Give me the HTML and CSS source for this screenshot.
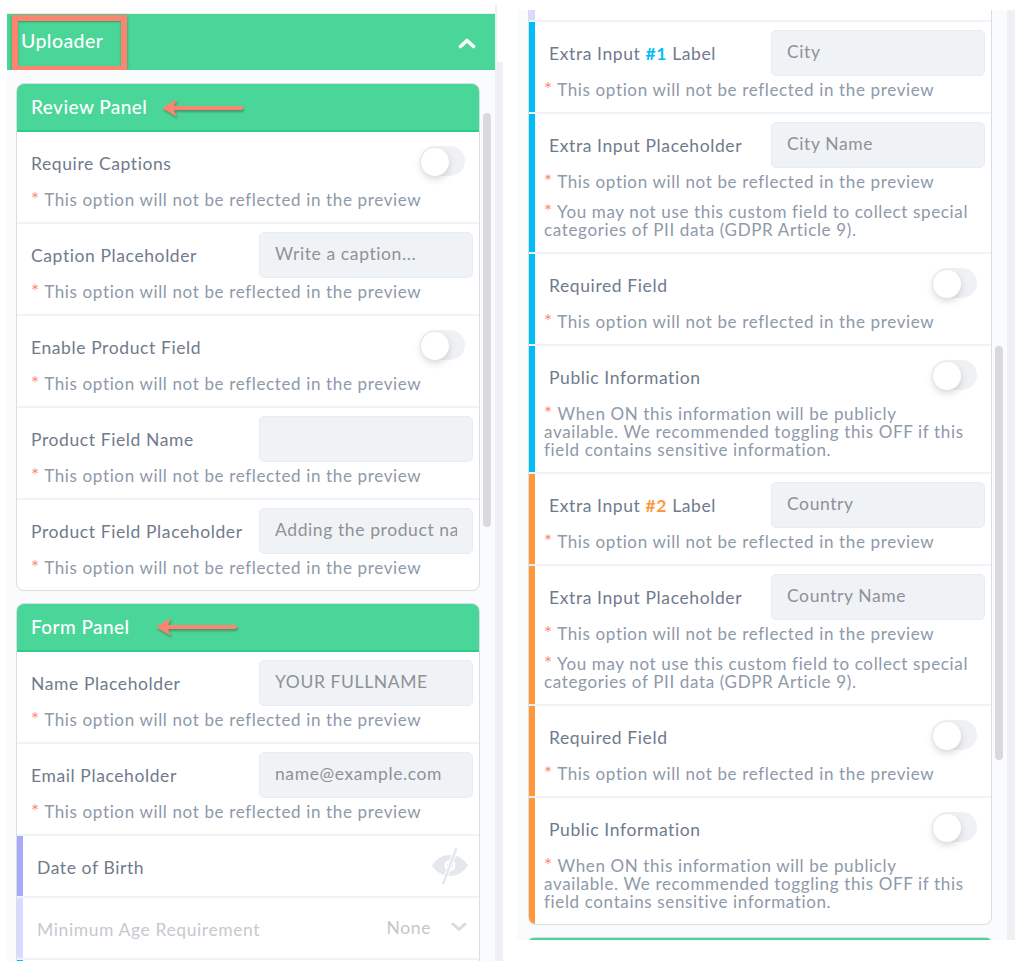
FILE: index.html
```html
<!DOCTYPE html>
<html lang="en">
<head>
<meta charset="utf-8">
<title>Uploader settings</title>
<link rel="stylesheet" href="styles.css">
</head>
<body>
<div class="page">
  <section class="side side-left">
    <div class="main">
      <header class="top-bar">
        <h1 class="top-title">Uploader</h1>
        <svg class="top-chevron" width="18" height="12" viewBox="0 0 18 12"><path d="M2.500 9.500 9 3.500l6.500 6" fill="none" stroke="#fff" stroke-width="3.600" stroke-linecap="round" stroke-linejoin="round"/></svg>
        <div class="callout"></div>
      </header>
      <div class="panel panel-left">
        <div class="scroll-thumb thumb-left"></div>
        <article class="card">
          <h2 class="card-head">Review Panel
            <svg class="arrow arrow-review" width="90" height="28" viewBox="0 0 90 28"><path d="M3 14 18 5l-3 7h67a2 2 0 0 1 0 4H15l3 7z" fill="#fc8570"/></svg>
          </h2>
          <div class="row"><div class="line"><span class="label">Require Captions</span><span class="toggle"><i class="knob"></i></span></div><p class="note"><b>*</b> This option will not be reflected in the preview</p></div>
          <div class="row"><div class="line"><span class="label">Caption Placeholder</span><input class="field" placeholder="Write a caption..."></div><p class="note"><b>*</b> This option will not be reflected in the preview</p></div>
          <div class="row"><div class="line"><span class="label">Enable Product Field</span><span class="toggle"><i class="knob"></i></span></div><p class="note"><b>*</b> This option will not be reflected in the preview</p></div>
          <div class="row"><div class="line"><span class="label">Product Field Name</span><input class="field"></div><p class="note"><b>*</b> This option will not be reflected in the preview</p></div>
          <div class="row last"><div class="line"><span class="label">Product Field Placeholder</span><input class="field" placeholder="Adding the product name"></div><p class="note"><b>*</b> This option will not be reflected in the preview</p></div>
        </article>
        <article class="card card-next">
          <h2 class="card-head">Form Panel
            <svg class="arrow arrow-form" width="90" height="28" viewBox="0 0 90 28"><path d="M3 14 18 5l-3 7h67a2 2 0 0 1 0 4H15l3 7z" fill="#fc8570"/></svg>
          </h2>
          <div class="row"><div class="line"><span class="label">Name Placeholder</span><input class="field" placeholder="YOUR FULLNAME"></div><p class="note"><b>*</b> This option will not be reflected in the preview</p></div>
          <div class="row"><div class="line"><span class="label">Email Placeholder</span><input class="field" placeholder="name@example.com"></div><p class="note"><b>*</b> This option will not be reflected in the preview</p></div>
          <div class="row row-plain bar-violet"><span class="label">Date of Birth</span>
            <svg class="eye" width="38" height="38" viewBox="0 0 38 38"><path d="M1 18.500C6 11 12 8 19 8s13 3 18 10.500C32 26 26 29 19 29S6 26 1 18.500z" fill="#e4e7ec"/><circle cx="19" cy="18.500" r="5.500" fill="#fff"/><circle cx="19" cy="18.500" r="3" fill="#e4e7ec"/><path d="M25.500 1 12 37" stroke="#fff" stroke-width="4.500"/><path d="M25.500 1 12 37" stroke="#e4e7ec" stroke-width="2.400"/></svg>
          </div>
          <div class="row row-plain bar-lavender"><span class="label label-muted">Minimum Age Requirement</span>
            <span class="select"><span class="select-value">None</span><svg width="16" height="10" viewBox="0 0 16 10"><path d="M2 2l6 5.500L14 2" fill="none" stroke="#d9dbe0" stroke-width="3" stroke-linecap="round" stroke-linejoin="round"/></svg></span>
          </div>
          <div class="row row-plain bar-cyan"></div>
        </article>
      </div>
    </div>
    <aside class="gutter gutter-left"><div class="gutter-line"></div><div class="gutter-band"></div></aside>
  </section>

  <section class="side side-right">
    <div class="panel panel-right">
      <div class="scroll-thumb thumb-right"></div>
      <article class="card card-right">
        <div class="row row-stub bar-lavender"></div>
        <div class="row bar-cyan"><div class="line"><span class="label">Extra Input <em class="num-cyan">#1</em> Label</span><input class="field" placeholder="City"></div><p class="note"><b>*</b> This option will not be reflected in the preview</p></div>
        <div class="row bar-cyan"><div class="line"><span class="label">Extra Input Placeholder</span><input class="field" placeholder="City Name"></div><p class="note"><b>*</b> This option will not be reflected in the preview</p><p class="note note-extra"><b>*</b> You may not use this custom field to collect special categories of PII data (GDPR Article 9).</p></div>
        <div class="row bar-cyan"><div class="line"><span class="label">Required Field</span><span class="toggle"><i class="knob"></i></span></div><p class="note"><b>*</b> This option will not be reflected in the preview</p></div>
        <div class="row bar-cyan"><div class="line"><span class="label">Public Information</span><span class="toggle"><i class="knob"></i></span></div><p class="note"><b>*</b> When ON this information will be publicly available. We recommended toggling this OFF if this field contains sensitive information.</p></div>
        <div class="row bar-orange"><div class="line"><span class="label">Extra Input <em class="num-orange">#2</em> Label</span><input class="field" placeholder="Country"></div><p class="note"><b>*</b> This option will not be reflected in the preview</p></div>
        <div class="row bar-orange"><div class="line"><span class="label">Extra Input Placeholder</span><input class="field" placeholder="Country Name"></div><p class="note"><b>*</b> This option will not be reflected in the preview</p><p class="note note-extra"><b>*</b> You may not use this custom field to collect special categories of PII data (GDPR Article 9).</p></div>
        <div class="row bar-orange"><div class="line"><span class="label">Required Field</span><span class="toggle"><i class="knob"></i></span></div><p class="note"><b>*</b> This option will not be reflected in the preview</p></div>
        <div class="row last bar-orange"><div class="line"><span class="label">Public Information</span><span class="toggle"><i class="knob"></i></span></div><p class="note"><b>*</b> When ON this information will be publicly available. We recommended toggling this OFF if this field contains sensitive information.</p></div>
      </article>
      <div class="next-card"></div>
    </div>
    <aside class="gutter gutter-right"></aside>
  </section>
</div>
</body>
</html>
```
FILE: styles.css
```css
* { box-sizing: border-box; }
html, body { margin: 0; height: 967px; overflow: hidden; background: #fff; }
body { font-family: Lato, "Open Sans", sans-serif; color: #6f7b8c; }

.page { display: flex; align-items: flex-start; }
.side { display: flex; align-items: flex-start; }
.side-left { margin-left: 7px; margin-top: 5px; }
.side-right { margin-left: 14px; margin-top: 10px; }
.main { width: 488px; margin-top: 8px; border-top: 1px solid #eceff2; }

.top-bar { position: relative; height: 56px; background: #4ad698; display: flex; align-items: center; justify-content: space-between; padding: 0 19px 3px 14px; }
.top-title { margin: 0; font-size: 19.500px; line-height: 24px; font-weight: 500; color: #fff; letter-spacing: .4px; }
.top-chevron { margin-top: 5px; }
.callout { position: absolute; left: 5px; top: 1px; width: 115px; height: 57px; border: 6px solid #fd8570; box-shadow: 0 1px 3px rgba(60,60,60,.45), inset 0 1px 2px rgba(30,90,60,.5); }

.panel { position: relative; background: #fafbfd; overflow: hidden; }
.panel-left { height: 891px; padding: 13px 0 0 9px; }
.panel-right { width: 490px; height: 930px; padding-left: 11px; }

.scroll-thumb { position: absolute; width: 8px; height: 414px; background: #d9d9d9; border-radius: 4px; }
.thumb-left { left: 476px; top: 43px; }
.thumb-right { left: 478px; top: 336px; }

.card { width: 464px; background: #fff; border: 1px solid #d9dee6; border-radius: 8px; overflow: hidden; }
.card-next { margin-top: 12px; }
.card-right { border-top: 0; border-radius: 0 0 8px 8px; }

.card-head { position: relative; margin: 0; height: 48px; padding: 0 14px 2px; display: flex; align-items: center; font-size: 19px; font-weight: 500; color: #fff; background: #4ad698; border-bottom: 2px solid #2fcb8c; letter-spacing: .45px; }
.arrow { position: absolute; filter: drop-shadow(1px 2px 1px rgba(50,70,60,.45)); }
.arrow-review { left: 142px; top: 10px; }
.arrow-form { left: 136px; top: 9px; }

.row { height: 92px; padding: 8px 6px 0 14px; border-bottom: 2px solid #eff2f6; }
.row.last { height: 90px; border-bottom: 0; }
.line { display: flex; align-items: center; justify-content: space-between; height: 46px; }
.label { font-size: 17.500px; line-height: 22px; letter-spacing: .6px; color: #6f7b8c; padding-top: 2px; }
.label-muted { color: #c6c9cf; }
.label em { font-style: normal; font-weight: 700; }
.num-cyan { color: #00bef5; }
.num-orange { color: #ff983b; }

.field { width: 214px; height: 46px; padding: 0 15px 4px; border: 1px solid #e9edf1; border-radius: 5px; background: #f0f3f6; font: inherit; font-size: 17.500px; letter-spacing: .6px; color: #8e9198; }
.field::placeholder { color: #8e9198; opacity: 1; }

.toggle { width: 45px; height: 30px; margin-right: 8px; margin-bottom: 4px; padding: 2px 1px 0; background: #f0f1f5; border-radius: 15px; display: block; }
.knob { display: block; width: 28px; height: 28px; border-radius: 50%; background: #fff; box-shadow: 0 3px 7px rgba(70,75,90,.22); }

.note { margin: 5px 0 0; max-width: 430px; font-size: 17px; line-height: 18px; letter-spacing: .64px; color: #8e99a9; }
.note b { font-size: 19px; line-height: 0; font-weight: 400; color: #ff8a6c; }
.note-extra { margin-top: 12px; }

.row[class*="bar-"] { padding-left: 15px; }
.side-right .row { height: auto; min-height: 92px; padding-bottom: 13px; }
.side-right .row.last { padding-bottom: 0; min-height: 0; height: 126px; }
.side-right .row-stub { min-height: 0; height: 12px; padding: 0; }
.side-right .line { padding-left: 5px; }

.bar-violet { box-shadow: inset 6px 0 0 #a6aaf8; }
.bar-lavender { box-shadow: inset 6px 0 0 #d8daff; }
.bar-cyan { box-shadow: inset 6px 0 0 #00bef5; }
.bar-orange { box-shadow: inset 6px 0 0 #ff983b; }

.row-plain { height: 62px; padding: 2px 12px 0 20px; display: flex; align-items: center; justify-content: space-between; }
.row-plain.bar-violet, .row-plain.bar-lavender { padding-left: 20px; }
.eye { margin-right: -2px; margin-bottom: 3px; }
.select { display: flex; align-items: center; gap: 20px; margin-bottom: 4px; }
.select-value { font-size: 17.500px; letter-spacing: .6px; color: #c4c6cc; }

.next-card { width: 464px; height: 6px; margin-top: 12px; background: #4ad698; border-top: 1px solid #d9dee6; border-radius: 8px 8px 0 0; }

.gutter { width: 8px; }
.gutter-left { display: flex; flex-direction: column; }
.gutter-line { width: 2px; height: 57px; background: #eff0f4; }
.gutter-band { width: 8px; height: 899px; background: #eef0f4; }
.gutter-right { height: 930px; background: #eef0f4; }
```
